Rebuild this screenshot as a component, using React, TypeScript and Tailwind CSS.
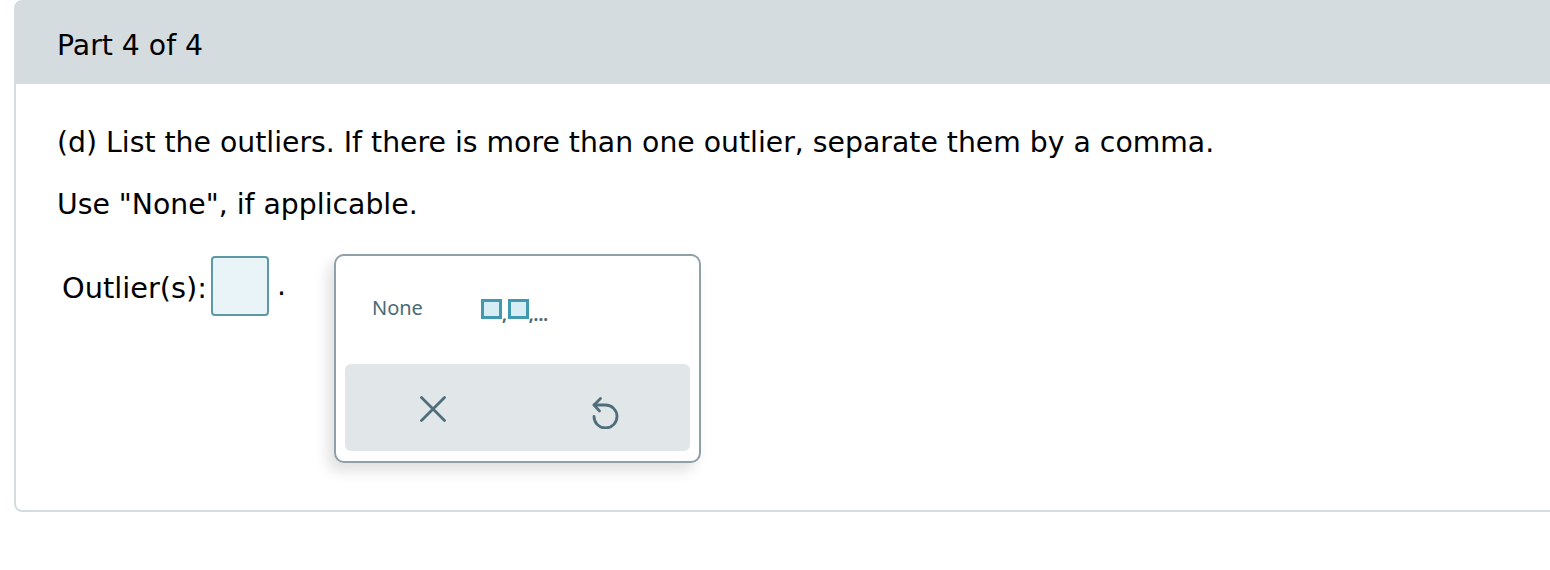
import React from "react";

export default function App() {
  return (
    <div className="w-[1550px] h-[570px] bg-white overflow-hidden" style={{ fontFamily: '"DejaVu Sans", Verdana, sans-serif' }}>
      <div className="ml-[14px] w-[1560px] h-[512px] border-2 border-[#d5dce0] rounded-[8px] flex flex-col">
        <div className="h-[82px] bg-[#d5dce0] flex items-center pl-[41px] pt-[6px] text-[28.3px] text-black">
          Part 4 of 4
        </div>
        <div className="pl-[41px] pt-[40px] text-black">
          <div className="text-[28.3px] leading-[38px]">
            (d) List the outliers. If there is more than one outlier, separate them by a comma.
          </div>
          <div className="text-[28.3px] leading-[38px] mt-[24px]">Use "None", if applicable.</div>
          <div className="flex items-start mt-[30px]">
            <div className="flex items-center ml-[5px] mt-[2px]">
              <span className="text-[28.8px] leading-[38px] mt-[4px]">Outlier(s):</span>
              <div className="ml-[4px] w-[58px] h-[60px] border-2 border-[#5e98a6] bg-[#e9f4f9] rounded-[4px]" />
              <span className="text-[28.3px] ml-[8px]">.</span>
            </div>
            <div className="ml-[48px] w-[367px] h-[209px] border-2 border-[#8fa0a8] rounded-[10px] bg-white shadow-[-6px_8px_14px_rgba(0,0,0,0.12)] flex flex-col px-[9px] pb-[10px]" style={{ fontFamily: '"Noto Sans", Inter, sans-serif' }}>
              <div className="flex items-center h-[108px]">
                <span className="ml-[27px] text-[20px] text-[#4b6a77] mt-[-4px]">None</span>
                <div className="ml-[58px] flex items-end mt-[-2px]">
                  <div className="w-[21px] h-[20px] border-[3px] border-[#4199b1] bg-[#d5edf3]" />
                  <span className="text-[#4b6a77] text-[17px] leading-[8px] font-bold">,</span>
                  <div className="ml-[1px] w-[21px] h-[20px] border-[3px] border-[#4199b1] bg-[#d5edf3]" />
                  <span className="text-[#4b6a77] text-[17px] leading-[8px] font-bold">,...</span>
                </div>
              </div>
              <div className="flex-1 bg-[#e1e6e9] rounded-[6px] flex items-center">
                <div className="w-[172px] flex justify-center">
                  <svg width="26" height="26" viewBox="0 0 26 26" className="mt-[2px] ml-[4px]">
                    <path d="M1.5 1.5 L24.5 24.5 M24.5 1.5 L1.5 24.5" stroke="#4f6e7b" strokeWidth="2.8" strokeLinecap="round" />
                  </svg>
                </div>
                <div className="w-[172px] flex justify-center">
                  <svg width="30" height="34" viewBox="0 0 30 34" className="mt-[8px] ml-[4px]">
                    <path d="M4 10 L15.5 10 A11.5 11.5 0 1 1 4 21.5" fill="none" stroke="#4f6e7b" strokeWidth="2.8" strokeLinecap="round" strokeLinejoin="round" />
                    <path d="M10.5 3.5 L4 10 L9.5 16" fill="none" stroke="#4f6e7b" strokeWidth="2.8" strokeLinecap="round" strokeLinejoin="round" />
                  </svg>
                </div>
              </div>
            </div>
          </div>
        </div>
      </div>
    </div>
  );
}
